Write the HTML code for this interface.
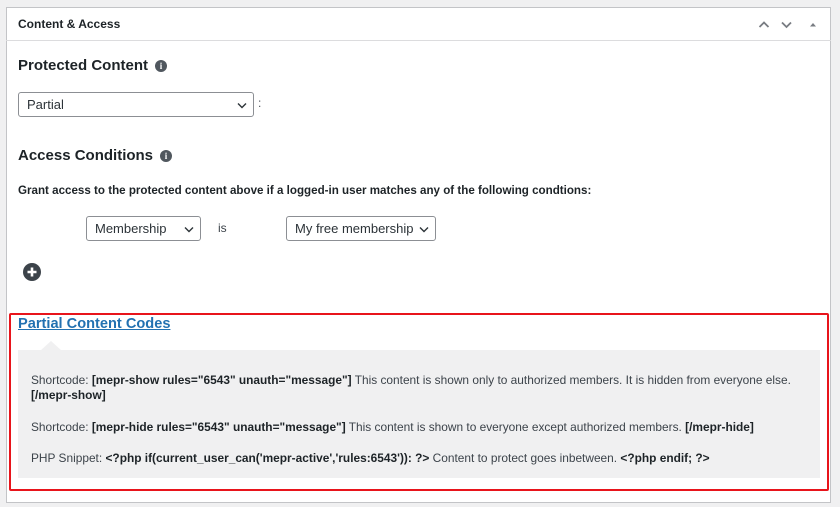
<!DOCTYPE html>
<html><head><meta charset="utf-8"><style>
*{box-sizing:border-box;margin:0;padding:0}
body{width:840px;height:507px;background:#f0f0f1;font-family:"Liberation Sans",Arial,sans-serif;color:#1d2327;position:relative;overflow:hidden}
.a{position:absolute;white-space:nowrap}
.panel{position:absolute;left:6px;top:7px;width:825px;height:496px;background:#fff;border:1px solid #c3c4c7}
.hdr{position:absolute;left:6px;top:7px;width:825px;height:34px;border-bottom:1px solid #dcdcde}
.sel{position:absolute;border:1px solid #8c8f94;border-radius:3px;background:#fff;font-size:13px;color:#2c3338;padding-left:8px;line-height:23px}
.sel svg{position:absolute;top:9px}
h2{position:absolute;font-size:15px;font-weight:bold;color:#1d2327;white-space:nowrap}
.info{display:inline-block;width:12px;height:12px;border-radius:50%;background:#50575e;color:#fff;font-size:9px;text-align:center;line-height:12px;font-family:"Liberation Serif",serif;font-weight:bold;margin-left:7px;vertical-align:1px}
.gray{position:absolute;left:18px;top:350px;width:802px;height:128px;background:#f0f0f1;font-size:11.9px;color:#3c434a}
.gray b{color:#1d2327}
</style></head><body>
<div class="panel"></div>
<div class="hdr"></div>
<div class="a" style="left:18px;top:17px;font-size:12px;font-weight:bold">Content &amp; Access</div>
<svg class="a" style="left:757px;top:19px" width="80" height="12"><path d="M2.5 8 L7 3.5 L11.5 8" stroke="#787c82" stroke-width="1.8" fill="none"/><path d="M25 3.5 L29.5 8 L34 3.5" stroke="#787c82" stroke-width="1.8" fill="none"/><path d="M53 7.5 L56 4 L59 7.5Z" fill="#787c82"/></svg>
<h2 style="left:18px;top:57px">Protected Content<span class="info">i</span></h2>
<div class="sel" style="left:18px;top:92px;width:236px;height:25px">Partial<svg style="left:217px" width="12" height="8"><path d="M2 1.5 L6 5.5 L10 1.5" stroke="#2c3338" stroke-width="1.4" fill="none"/></svg></div>
<div class="a" style="left:258px;top:96px;font-size:12px;color:#50575e">:</div>
<h2 style="left:18px;top:147px">Access Conditions<span class="info">i</span></h2>
<div class="a" style="left:18px;top:184px;font-size:11.6px;font-weight:bold;color:#1d2327">Grant access to the protected content above if a logged-in user matches any of the following condtions:</div>
<div class="sel" style="left:86px;top:216px;width:115px;height:25px">Membership<svg style="left:96px" width="12" height="8"><path d="M2 1.5 L6 5.5 L10 1.5" stroke="#2c3338" stroke-width="1.4" fill="none"/></svg></div>
<div class="a" style="left:218px;top:221px;font-size:12px;color:#3c434a">is</div>
<div class="sel" style="left:286px;top:216px;width:150px;height:25px">My free membership<svg style="left:131px" width="12" height="8"><path d="M2 1.5 L6 5.5 L10 1.5" stroke="#2c3338" stroke-width="1.4" fill="none"/></svg></div>
<svg class="a" style="left:23px;top:263px" width="18" height="18"><circle cx="9" cy="9" r="9" fill="#3c434a"/><path d="M9 4.5V13.5M4.5 9H13.5" stroke="#fff" stroke-width="2.6"/></svg>
<div class="a" style="left:9px;top:313px;width:820px;height:178px;border:2px solid #e8141b;border-radius:2px"></div>
<div class="a" style="left:18px;top:316px;font-size:14.6px;font-weight:bold;color:#2271b1;text-decoration:underline">Partial Content Codes</div>
<svg class="a" style="left:40px;top:341px" width="22" height="10"><path d="M0 10 L11 0 L22 10Z" fill="#f0f0f1"/></svg>
<div class="gray">
<div class="a" style="left:13px;top:23px">Shortcode: <b>[mepr-show rules="6543" unauth="message"]</b> This content is shown only to authorized members. It is hidden from everyone else.</div>
<div class="a" style="left:13px;top:38px"><b>[/mepr-show]</b></div>
<div class="a" style="left:13px;top:70px">Shortcode: <b>[mepr-hide rules="6543" unauth="message"]</b> This content is shown to everyone except authorized members. <b>[/mepr-hide]</b></div>
<div class="a" style="left:13px;top:101px">PHP Snippet: <b>&lt;?php if(current_user_can('mepr-active','rules:6543')): ?&gt;</b> Content to protect goes inbetween. <b>&lt;?php endif; ?&gt;</b></div>
</div>
</body></html>
